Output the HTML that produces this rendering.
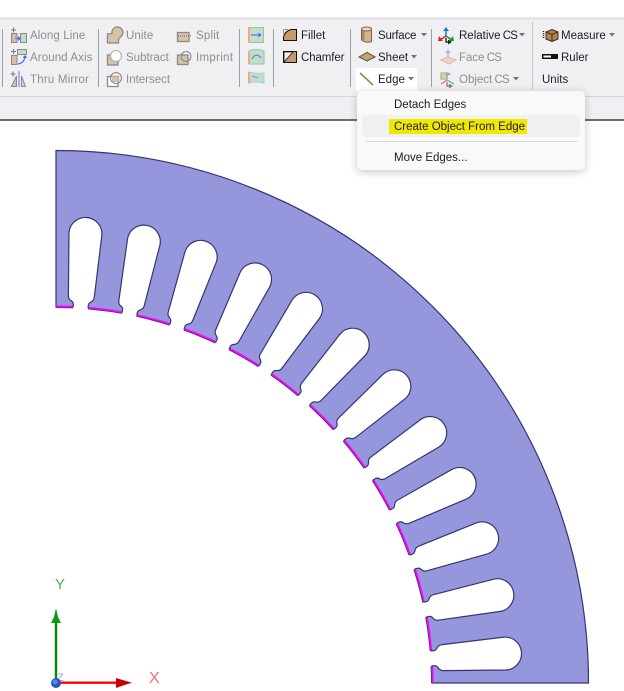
<!DOCTYPE html>
<html><head><meta charset="utf-8"><style>
html,body{margin:0;padding:0;background:#fff}
#p{position:relative;width:624px;height:691px;overflow:hidden;background:#fff;font-family:"Liberation Sans",sans-serif}
.t{position:absolute;font-size:11.5px;line-height:14px;white-space:nowrap;color:#1c1c28}
.d{color:#8c8c92}
.c{letter-spacing:-.8px}
.s{position:absolute;width:1px;background:#98a0ac}
svg{position:absolute;left:0;top:0}
</style></head><body><div id="p">
<div style="position:absolute;left:0;top:17px;width:624px;height:103px;background:#f0f0f2"></div>
<div style="position:absolute;left:0;top:17px;width:624px;height:3px;background:#e6e6e8"></div>
<div style="position:absolute;left:0;top:96px;width:624px;height:1px;background:#d2d4e2"></div>
<div style="position:absolute;left:0;top:119px;width:624px;height:2px;background:#6e6e6e"></div>
<div style="position:absolute;left:356px;top:68px;width:61px;height:24px;background:#fff"></div>
<div class="s" style="left:2px;top:29px;height:58px"></div>
<div class="s" style="left:98px;top:29px;height:58px"></div>
<div class="s" style="left:239px;top:29px;height:58px"></div>
<div class="s" style="left:273px;top:29px;height:58px"></div>
<div class="s" style="left:350px;top:29px;height:58px"></div>
<div class="s" style="left:431px;top:29px;height:58px"></div>
<div class="s" style="left:532px;top:22px;height:68px;background:#c4c8d0"></div>
<div class="t d" style="left:30px;top:29px;letter-spacing:.1px">Along Line</div>
<div class="t d" style="left:30px;top:51px;letter-spacing:.1px">Around Axis</div>
<div class="t d" style="left:30px;top:73px;letter-spacing:.2px">Thru Mirror</div>
<div class="t d" style="left:126px;top:29px;letter-spacing:.1px">Unite</div>
<div class="t d" style="left:126px;top:51px">Subtract</div>
<div class="t d" style="left:126px;top:73px">Intersect</div>
<div class="t d" style="left:196px;top:29px;letter-spacing:.2px">Split</div>
<div class="t d" style="left:196px;top:51px;letter-spacing:.3px">Imprint</div>
<div class="t" style="left:301px;top:29px">Fillet</div>
<div class="t" style="left:301px;top:51px;letter-spacing:-.1px">Chamfer</div>
<div class="t" style="left:378px;top:29px;letter-spacing:-.2px">Surface</div>
<div class="t" style="left:378px;top:51px">Sheet</div>
<div class="t" style="left:378px;top:73px">Edge</div>
<div class="t" style="left:459px;top:29px;word-spacing:-1px">Relative <span class="c">CS</span></div>
<div class="t d" style="left:459px;top:51px;word-spacing:-1px">Face <span class="c">CS</span></div>
<div class="t d" style="left:459px;top:73px;word-spacing:-1px">Object <span class="c">CS</span></div>
<div class="t" style="left:561px;top:29px">Measure</div>
<div class="t" style="left:561px;top:51px">Ruler</div>
<div class="t" style="left:542px;top:73px">Units</div>

<svg width="624" height="691" viewBox="0 0 624 691">
<defs>
<g id="slot">
<path d="M-7.5,-372V-379Q-7.5,-381 -10,-382.5Q-13,-384 -13,-388L-16.5,-450A16.5,16.5 0 0 1 16.5,-450L13,-388Q13,-384 10,-382.5Q7.5,-381 7.5,-379V-372Z" fill="#fff"/>
<path d="M-7.5,-376V-379Q-7.5,-381 -10,-382.5Q-13,-384 -13,-388L-16.5,-450A16.5,16.5 0 0 1 16.5,-450L13,-388Q13,-384 10,-382.5Q7.5,-381 7.5,-379V-376" fill="none" stroke="#35356f" stroke-width="1.2"/>
</g>
</defs>
<path d="M56,150.5A532.5,532.5 0 0 1 588.5,683H432A376,376 0 0 0 56,307Z" fill="#9696dc" stroke="#35356f" stroke-width="1.2"/>
<path d="M56,307.600A375.400,375.400 0 0 1 431.400,683" fill="none" stroke="#35356f" stroke-width="0.800"/>
<path d="M56,306.300A376.700,376.700 0 0 1 432.700,683" fill="none" stroke="#f0f" stroke-width="1.800"/>
<g transform="translate(56,683)">
<use href="#slot" transform="rotate(3.75)"/>
<use href="#slot" transform="rotate(11.25)"/>
<use href="#slot" transform="rotate(18.75)"/>
<use href="#slot" transform="rotate(26.25)"/>
<use href="#slot" transform="rotate(33.75)"/>
<use href="#slot" transform="rotate(41.25)"/>
<use href="#slot" transform="rotate(48.75)"/>
<use href="#slot" transform="rotate(56.25)"/>
<use href="#slot" transform="rotate(63.75)"/>
<use href="#slot" transform="rotate(71.25)"/>
<use href="#slot" transform="rotate(78.75)"/>
<use href="#slot" transform="rotate(86.25)"/>
</g>

<!-- triad -->
<path d="M56,683V620" stroke="#008a00" stroke-width="2.4"/>
<path d="M56,608L58,617L61,623H51L54,617Z" fill="#0a9a0a"/>
<path d="M56,682.700H117" stroke="#f00" stroke-width="2.4"/>
<path d="M116,678V688L126,684.500L132,682.700L126,681Z" fill="#c80000"/>
<text x="57" y="681" font-family="Liberation Sans" font-size="11" fill="#8aa4f0">Z</text>
<circle cx="56" cy="683" r="5" fill="#2a56b8"/>
<circle cx="55" cy="682" r="2.5" fill="#5a86e8"/>
<text x="55" y="589" font-family="Liberation Sans" font-size="15" fill="#4ab05a">Y</text>
<text x="149" y="683" font-family="Liberation Sans" font-size="16" fill="#f47070">X</text>

<!-- icons: transforms col -->
<g stroke="#8a8a8a" stroke-width="1">
<path d="M13.5,27.5v5M11,30h5" fill="none" stroke="#777"/>
<rect x="11.5" y="33.5" width="5.5" height="9" fill="#d4bfa6"/>
<rect x="20.5" y="33.5" width="6" height="9" fill="#bfe0c2"/>
<path d="M13.5,49v5M11,51.5h5" fill="none" stroke="#777"/>
<rect x="11.5" y="55.5" width="5.5" height="9" fill="#d4bfa6"/>
<rect x="17.5" y="49.5" width="9" height="5" fill="#bfe0c2"/>
<path d="M13,71.5v5M10.5,74h5" fill="none" stroke="#777"/>
<path d="M11.5,86.5L16.5,76V86.5Z" fill="#d4bfa6"/>
<path d="M21.5,86.5V76L25.5,86.5Z" fill="#bfe0c2"/>
</g>
<path d="M15,38.500h5" stroke="#6a6af0" stroke-width="1.2"/><path d="M18,36l3,2.500l-3,2.500z" fill="#5a5af0"/>
<path d="M18,64Q24,63 25,57" fill="none" stroke="#6a6af0" stroke-width="1.3"/><path d="M22.500,58l2.500,-3l2,3z" fill="#5a5af0"/>
<path d="M19,71V87" stroke="#6a6af0" stroke-width="1"/>

<!-- boolean -->
<g stroke="#8a8a8a" stroke-width="1.3">
<path d="M107.500,43V34L112,33.500A5.500,5.500 0 1 1 120.500,37L118.500,39.500V43Z" fill="#d8c2a8"/>
<rect x="107.500" y="55" width="10.500" height="10" fill="#d8c2a8"/>
<rect x="107.500" y="76.500" width="10.500" height="10" fill="#fff"/>
<path d="M112,76.500H118V82H112Z" fill="#d8c2a8" stroke="none"/>
<rect x="177.500" y="32.500" width="11.500" height="9" fill="#d8c2a8"/>
<rect x="177.500" y="55" width="10.500" height="9.500" fill="#d8c2a8"/>
</g>
<circle cx="116" cy="56" r="5.500" fill="#fff" stroke="#aaa"/>
<circle cx="116" cy="78" r="5.500" fill="none" stroke="#8a8a8a" stroke-width="1.100"/>
<circle cx="186" cy="56.500" r="5" fill="none" stroke="#8a8a8a" stroke-width="1.100"/>
<path d="M178,36h14" stroke="#666" stroke-dasharray="1 1" stroke-width="1"/>

<!-- sweep col -->
<rect x="248.500" y="27.500" width="15" height="15" fill="#bfe0c6" stroke="#9cc0a6"/>
<rect x="248" y="27" width="2" height="16" fill="#f0aa7c"/>
<path d="M251,35h9" stroke="#6a6af0" stroke-width="1.200"/><path d="M258.500,32.500l3,2.500l-3,2.500z" fill="#5a5af0"/>
<path d="M249,51Q256,48 264,51V64H249Z" fill="#bfe0c6" stroke="#9cc0a6"/>
<rect x="248" y="52" width="2" height="12" fill="#f0aa7c"/>
<path d="M252,59Q256,52 261,58" fill="none" stroke="#6a6af0" stroke-width="1.100"/>
<path d="M249,72Q256,74 264,73V83Q256,81 249,83Z" fill="#bfe0c6" stroke="#a4cce4"/>
<rect x="248" y="72" width="2" height="11" fill="#f0aa7c"/>
<path d="M252,76l6,2" stroke="#8a8ae0" stroke-width="1.100"/>

<!-- fillet chamfer -->
<path d="M283.500,29.500H288" stroke="#999" fill="none"/><path d="M283.500,29.500V34" stroke="#999" fill="none"/>
<path d="M283.500,40.500V37Q285,31 291,29.500H296.500V40.500Z" fill="#c49a6c" stroke="#111" stroke-width="1"/>
<path d="M283.500,62.500V51.500H296.500V62.500Z" fill="#c49a6c" stroke="#111" stroke-width="1"/>
<path d="M284,62L293,52H284Z" fill="#f0f0f2" stroke="#111" stroke-width="0.800"/>

<!-- surface sheet edge -->
<path d="M361.500,29V40Q366,43.500 371.500,41.500V29Z" fill="#d8b48c" stroke="#7a6650"/>
<path d="M362,30V40h2.500V30z" fill="#a88a68"/>
<ellipse cx="366.500" cy="29" rx="5" ry="2" fill="#e8d8c4" stroke="#7a6650"/>
<path d="M359,57L367,52.500L375,57L367,61Z" fill="#c8a26c" stroke="#55503c"/>
<path d="M360,73L373,85" stroke="#a67c52" stroke-width="1.600"/>

<!-- CS icons -->
<g fill="none" stroke-width="1.500">
<path d="M446,36V30" stroke="#1a78d8"/><path d="M443,31l3,-4l3,4z" fill="#1a78d8" stroke="none"/>
<path d="M446,36L440,40" stroke="#e02020"/><path d="M439,36l-1,5l5,0z" fill="#e02020" stroke="none"/>
<path d="M446,36L452,40" stroke="#109a30"/><path d="M453,36l1,5l-5,0z" fill="#109a30" stroke="none"/>
<path d="M446,38V42H449" stroke="#333"/><path d="M448,39.500l4,2.500l-4,2.500z" fill="#222" stroke="none"/>
</g>
<g opacity="0.55">
<path d="M441,60L448,57L456,60L449,64Z" fill="#eec49c" stroke="#e08080"/>
<path d="M448,58V52" stroke="#6aa0e0" stroke-width="1.500"/><path d="M445,53l3,-4l3,4z" fill="#5a98e0"/>
</g>
<g opacity="0.55" fill="none" stroke-width="1.400">
<rect x="441" y="73" width="6" height="6" fill="#c8b860" stroke="#8a8a4a"/>
<path d="M447,78V75" stroke="#1a78d8"/><path d="M445,75l3,-3l3,3z" fill="#1a78d8" stroke="none"/>
<path d="M447,80L441,84" stroke="#e02020"/><path d="M447,80L454,84" stroke="#109a30"/>
<path d="M447,82V86H450" stroke="#333"/><path d="M449,83.500l4,2.500l-4,2.500z" fill="#222" stroke="none"/>
</g>

<!-- measure ruler -->
<path d="M546,32L552,29.500L558,32V39L552,41.500L546,39Z" fill="#b8824e" stroke="#3c2c1c"/>
<path d="M546,32L552,34.500L558,32M552,34.500V41.500" fill="none" stroke="#3c2c1c"/>
<path d="M543.500,31v8" stroke="#222" stroke-dasharray="1 1" stroke-width="1.500"/>
<rect x="542.500" y="54.500" width="15" height="4" fill="#111" stroke="#111"/>
<rect x="543.500" y="55.500" width="7.500" height="2" fill="#fff"/>

<!-- arrows -->
<g fill="#707078">
<path d="M421,33h6l-3,3.500z"/><path d="M411,55h6l-3,3.500z"/><path d="M408,77h6l-3,3.500z"/>
<path d="M519,33h6l-3,3.500z"/><path d="M513,77h6l-3,3.500z"/><path d="M609,33h6l-3,3.500z"/>
</g>
</svg>

<div style="position:absolute;left:357px;top:91px;width:228px;height:79px;background:#f9f9f9;border-radius:5px;box-shadow:0 2px 9px rgba(0,0,0,.22)"></div>
<div style="position:absolute;left:362px;top:115px;width:218px;height:22px;background:#f0f0f0;border-radius:4px"></div>
<div style="position:absolute;left:389px;top:119px;width:138px;height:15px;background:#f0e800"></div>
<div style="position:absolute;left:365px;top:141px;width:212px;height:1px;background:#d8d8d8"></div>
<div class="t" style="left:394px;top:98px">Detach Edges</div>
<div class="t" style="left:394px;top:120px">Create Object From Edge</div>
<div class="t" style="left:394px;top:151px">Move Edges...</div>
</div></body></html>
